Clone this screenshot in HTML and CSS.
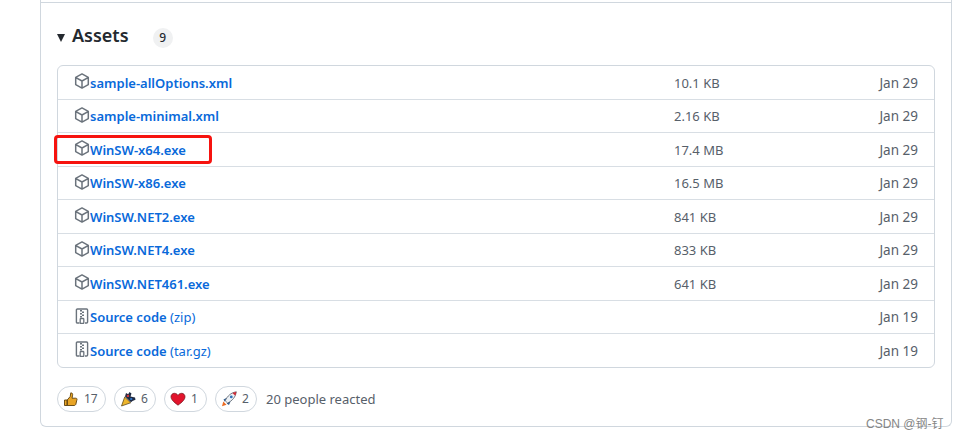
FILE: index.html
```html
<!DOCTYPE html>
<html lang="en">
<head>
<meta charset="utf-8">
<title>Assets</title>
<link rel="stylesheet" href="styles.css">
</head>
<body>
<svg class="defs" width="0" height="0" aria-hidden="true">
  <symbol id="pkg" viewBox="0 0 16 16"><path fill="none" stroke="currentColor" stroke-width="1.5" stroke-linejoin="round" d="M8 .9l6.300 3.500v7.200L8 15.100l-6.300-3.500V4.400L8 .9zM1.900 4.600L8 8l6.100-3.400M8 8v7"/></symbol>
  <symbol id="zip" viewBox="0 0 16 16"><path fill="none" stroke="currentColor" stroke-width="1.400" stroke-linejoin="round" d="M5.500 15H3.400a1 1 0 0 1-1-1V2a1 1 0 0 1 1-1h9.200a1 1 0 0 1 1 1v12a1 1 0 0 1-1 1H11"/><path fill="currentColor" d="M6 2h2v1.500H6zM8 3.500h2V5H8zM6 5h2v1.500H6zM8 6.500h2V8H8zM6 8h2v1.500H6z"/><rect x="6.200" y="10.500" width="3.600" height="5" rx=".8" fill="none" stroke="currentColor" stroke-width="1.300"/></symbol>
</svg>
<main class="card">
  <div class="heading">
    <span class="caret"></span>
    <h2 class="title">Assets</h2>
    <span class="counter">9</span>
  </div>
  <ul class="assets">
    <li class="row"><a class="name"><svg class="icon"><use href="#pkg"/></svg>sample-allOptions.xml</a><span class="size">10.1 KB</span><span class="date">Jan 29</span></li>
    <li class="row"><a class="name"><svg class="icon"><use href="#pkg"/></svg>sample-minimal.xml</a><span class="size">2.16 KB</span><span class="date">Jan 29</span></li>
    <li class="row"><a class="name"><svg class="icon"><use href="#pkg"/></svg>WinSW-x64.exe</a><span class="size">17.4 MB</span><span class="date">Jan 29</span><span class="highlight"></span></li>
    <li class="row"><a class="name"><svg class="icon"><use href="#pkg"/></svg>WinSW-x86.exe</a><span class="size">16.5 MB</span><span class="date">Jan 29</span></li>
    <li class="row"><a class="name"><svg class="icon"><use href="#pkg"/></svg>WinSW.NET2.exe</a><span class="size">841 KB</span><span class="date">Jan 29</span></li>
    <li class="row"><a class="name"><svg class="icon"><use href="#pkg"/></svg>WinSW.NET4.exe</a><span class="size">833 KB</span><span class="date">Jan 29</span></li>
    <li class="row"><a class="name"><svg class="icon"><use href="#pkg"/></svg>WinSW.NET461.exe</a><span class="size">641 KB</span><span class="date">Jan 29</span></li>
    <li class="row"><a class="name"><svg class="icon"><use href="#zip"/></svg>Source code <span class="ext">(zip)</span></a><span class="size"></span><span class="date">Jan 19</span></li>
    <li class="row"><a class="name"><svg class="icon"><use href="#zip"/></svg>Source code <span class="ext">(tar.gz)</span></a><span class="size"></span><span class="date">Jan 19</span></li>
  </ul>
  <div class="reactions">
    <span class="pill pill-thumb"><svg class="emoji" viewBox="0 0 16 16"><path fill="#e8a425" stroke="#5c3f0c" stroke-width=".9" stroke-linejoin="round" d="M1.500 9h2.700v5.500H1.500zM4.200 9l3-3.500.6-3.700c1.600 0 2.200 1.400 1.700 3L9 7.200h3.800c1.200 0 1.500 1.100 1 1.900l-.9 4c-.3 1-1 1.400-1.900 1.400H4.200z"/></svg><span class="count">17</span></span>
    <span class="pill pill-tada"><svg class="emoji" viewBox="0 0 16 16"><path fill="#edb52c" stroke="#4d3a0e" stroke-width=".7" stroke-linejoin="round" d="M1.500 15l3.200-9 6 5.800z"/><path fill="#1f2a42" d="M5 5.500l1-3.500 2.200 1.200L9.500 1l2 1.500-1 3L15 6.500l.5 2.300-3 1.200-1.500 1.300z"/><path fill="#c8353a" d="M6.800 3.800h2.200V6H6.800z"/><path fill="#2f72c4" d="M10.200 7h2v2h-2z"/></svg><span class="count">6</span></span>
    <span class="pill pill-heart"><svg class="emoji" viewBox="0 0 16 16"><path fill="#e2142c" stroke="#6e0e16" stroke-width=".7" d="M8 14.200C3.600 11 1 8.500 1 5.700 1 3.600 2.600 2.300 4.300 2.300 5.800 2.300 7.200 3 8 4.400 8.800 3 10.200 2.300 11.700 2.300c1.700 0 3.300 1.300 3.300 3.400 0 2.800-2.600 5.300-7 8.500z"/></svg><span class="count">1</span></span>
    <span class="pill pill-rocket"><svg class="emoji" viewBox="0 0 16 16"><path fill="#ea6a22" d="M1 15.200l1.300-4.700 3.200 3.200z"/><path fill="#2f5f94" d="M2.500 8.500l3.300-1.700-2 4zM8 14l1.600-3.500-4 2z"/><path fill="#eef2f6" stroke="#3d4854" stroke-width=".7" stroke-linejoin="round" d="M4.200 9.800C6.300 5 10 1.600 15.300.8c-.7 5.200-4 9-8.700 11.200z"/><path fill="#cf2c36" d="M11.300 2L15.300.8c-.1 1.400-.5 2.800-1 4z"/><circle cx="10.300" cy="5.900" r="1.400" fill="#2f72b8"/></svg><span class="count">2</span></span>
    <span class="summary">20 people reacted</span>
  </div>
</main>
<div class="watermark">CSDN @钢-钉</div>
</body>
</html>
```
FILE: styles.css
```css
* { box-sizing: border-box; }
html, body { margin: 0; padding: 0; }
body {
  width: 959px;
  height: 438px;
  overflow: hidden;
  background: #fff;
  font-family: "Noto Sans", "Open Sans", "Noto Sans CJK SC", sans-serif;
  font-size: 13px;
  color: #6a737d;
  position: relative;
}
.defs { position: absolute; }
.card {
  width: 912px;
  height: 427px;
  margin-left: 40px;
  padding: 0 16px;
  border: 1px solid #d0d7de;
  border-top: 0;
  border-radius: 0 0 6px 6px;
  background: linear-gradient(#fff 2px, #d0d7de 2px, #d0d7de 3px, #fff 3px);
}
.heading {
  display: flex;
  align-items: center;
  height: 65px;
  padding-top: 8px;
}
.caret {
  width: 0;
  height: 0;
  border-left: 4px solid transparent;
  border-right: 4px solid transparent;
  border-top: 8px solid #24292f;
  margin-right: 7px;
  margin-top: 3px;
}
.title {
  margin: -1px 0 3px;
  font-size: 18px;
  font-weight: 600;
  color: #24292f;
  line-height: 24px;
}
.counter {
  width: 20px;
  height: 20px;
  margin-left: 24px;
  margin-top: 3px;
  border-radius: 10px;
  background: #f0f1f2;
  color: #24292f;
  font-size: 12px;
  font-weight: 500;
  text-align: center;
  line-height: 20px;
}
.assets {
  list-style: none;
  margin: 0;
  padding: 0;
  border: 1px solid #d0d7de;
  border-radius: 6px;
  width: 878px;
}
.row {
  position: relative;
  display: grid;
  grid-template-columns: 600px 1fr auto;
  align-items: center;
  height: 33.5px;
  padding: 1px 16px 0;
  border-top: 1px solid #d8dee4;
}
.row:first-child { border-top: 0; height: 32.5px; }
.name {
  display: flex;
  align-items: center;
  color: #0969da;
  font-weight: 600;
  white-space: pre;
}
.ext { font-weight: 400; }
.icon { width: 16px; height: 16px; color: #6b737c; margin-top: -3px; }
.size, .date { color: #57606a; }
.date { font-size: 13.5px; }
.highlight {
  position: absolute;
  left: -4px;
  top: 2px;
  width: 158px;
  height: 29px;
  border: 3px solid #f6130f;
  border-radius: 4px;
}
.reactions {
  display: flex;
  align-items: center;
  gap: 8px;
  margin-top: 18px;
}
.pill {
  display: flex;
  align-items: center;
  height: 26px;
  padding: 0 0 0 5px;
  border: 1px solid #d0d7de;
  border-radius: 13px;
  font-size: 12px;
}
.emoji { width: 16px; height: 16px; margin-right: 5px; }
.pill-thumb { width: 49px; }
.pill-tada { width: 42px; }
.pill-heart { width: 43px; }
.pill-rocket { width: 42px; }
.count { color: #57606a; }
.summary { margin-left: 1px; color: #57606a; font-size: 13px; }
.watermark {
  position: absolute;
  left: 866px;
  top: 414px;
  font-family: "Liberation Sans", "Noto Sans CJK SC", sans-serif;
  font-size: 12px;
  color: #858585;
}
```
